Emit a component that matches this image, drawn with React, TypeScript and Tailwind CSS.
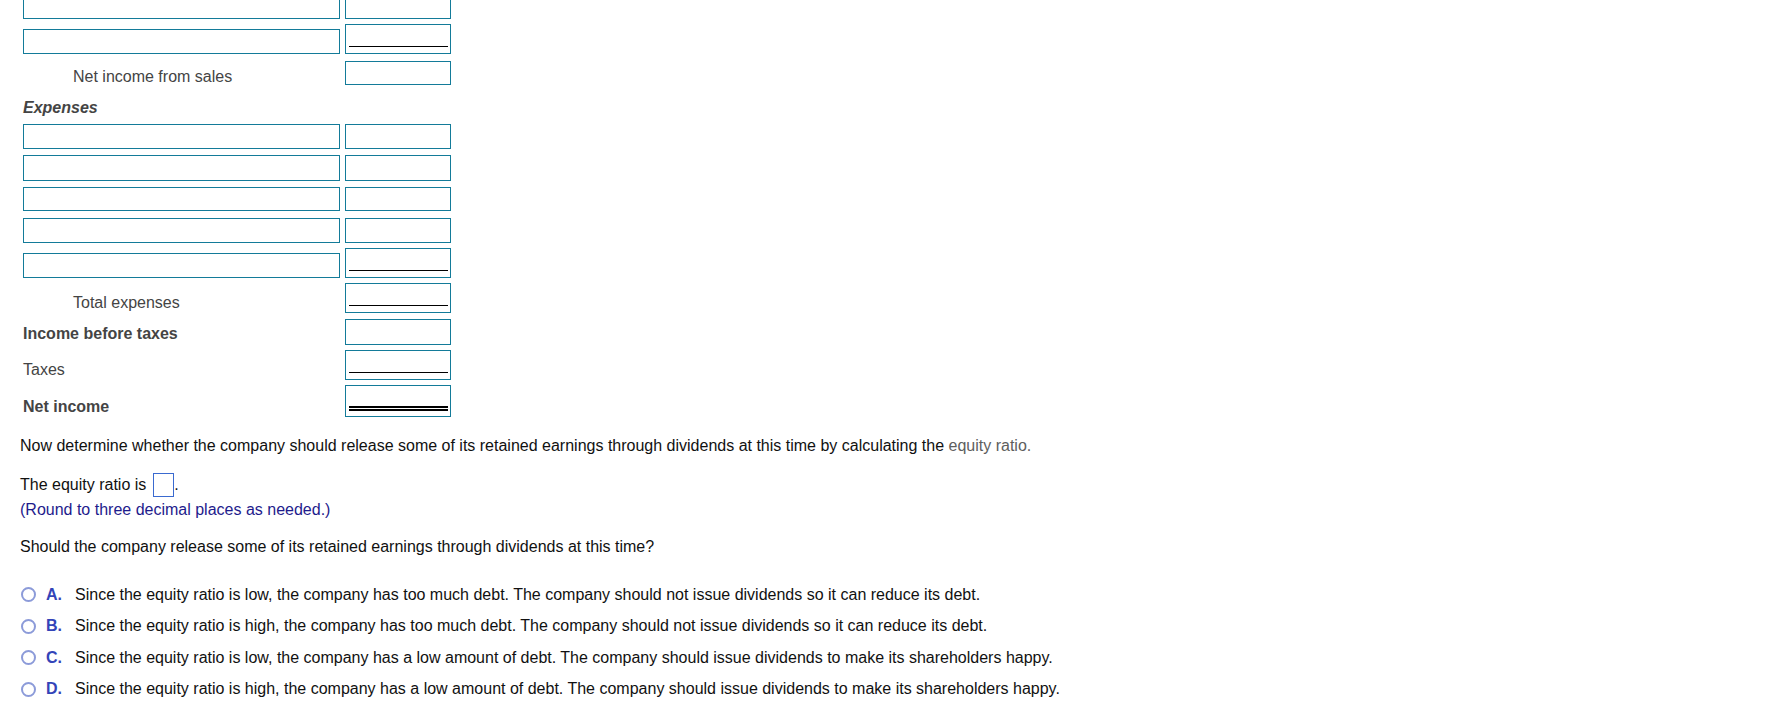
import React from "react";

const TEAL = "border-[#137b99]";

function Box({ h, line }: { h: string; line?: "single" | "double" }) {
  return (
    <div className={`relative w-[106px] shrink-0 border ${TEAL} bg-white ${h}`}>
      {line === "single" && (
        <div className="absolute left-[3px] right-[2px] bottom-[6px] h-px bg-black" />
      )}
      {line === "double" && (
        <div className="absolute left-[3px] right-[2px] bottom-[5px] flex flex-col gap-px">
          <div className="h-[2px] bg-black" />
          <div className="h-[2px] bg-black" />
        </div>
      )}
    </div>
  );
}

function InputRow({ mt, h, line, leftH = "h-[25px]" }: { mt: string; h: string; line?: "single" | "double"; leftH?: string }) {
  return (
    <div className={`flex items-end gap-[5px] ${mt}`}>
      <div className={`w-[317px] shrink-0 border ${TEAL} bg-white ${leftH}`} />
      <Box h={h} line={line} />
    </div>
  );
}

function LabelRow({
  mt,
  h,
  label,
  indent,
  bold,
  pt,
  line,
}: {
  mt: string;
  h: string;
  label: string;
  indent?: boolean;
  bold?: boolean;
  pt: string;
  line?: "single" | "double";
}) {
  return (
    <div className={`flex gap-[5px] ${mt}`}>
      <div
        className={`w-[317px] shrink-0 text-[16px] leading-[18px] text-[#444] ${indent ? "pl-[50px]" : ""} ${bold ? "font-bold" : ""} ${pt}`}
      >
        {label}
      </div>
      <Box h={h} line={line} />
    </div>
  );
}

const options = [
  { k: "A.", t: "Since the equity ratio is low, the company has too much debt. The company should not issue dividends so it can reduce its debt." },
  { k: "B.", t: "Since the equity ratio is high, the company has too much debt. The company should not issue dividends so it can reduce its debt." },
  { k: "C.", t: "Since the equity ratio is low, the company has a low amount of debt. The company should issue dividends to make its shareholders happy." },
  { k: "D.", t: "Since the equity ratio is high, the company has a low amount of debt. The company should issue dividends to make its shareholders happy." },
];

export default function App() {
  return (
    <div className="w-[1766px] h-[707px] overflow-hidden bg-white font-['Liberation_Sans',Arial,sans-serif]">
      {/* statement table */}
      <div className="pl-[23px] -mt-[6px]">
        <InputRow mt="mt-0" h="h-[25px]" />
        <InputRow mt="mt-[5px]" h="h-[30px]" line="single" />
        <LabelRow mt="mt-[7px]" h="h-[24px]" label="Net income from sales" indent pt="pt-[7px]" />
        <div className="mt-[10px] h-[22px] pt-[3px] text-[16px] leading-[18px] font-bold italic text-[#444]">Expenses</div>
        <InputRow mt="mt-[6px]" h="h-[25px]" />
        <InputRow mt="mt-[6px]" h="h-[26px]" leftH="h-[26px]" />
        <InputRow mt="mt-[6px]" h="h-[24px]" leftH="h-[24px]" />
        <InputRow mt="mt-[7px]" h="h-[25px]" />
        <InputRow mt="mt-[5px]" h="h-[30px]" line="single" />
        <LabelRow mt="mt-[5px]" h="h-[30px]" label="Total expenses" indent pt="pt-[11px]" line="single" />
        <LabelRow mt="mt-[6px]" h="h-[26px]" label="Income before taxes" bold pt="pt-[6px]" />
        <LabelRow mt="mt-[5px]" h="h-[30px]" label="Taxes" pt="pt-[11px]" line="single" />
        <LabelRow mt="mt-[5px]" h="h-[32px]" label="Net income" bold pt="pt-[13px]" line="double" />
      </div>

      {/* question text */}
      <div className="pl-[20px] text-[16px] leading-[18px] text-[#111]">
        <p className="mt-[20px]">
          Now determine whether the company should release some of its retained earnings through dividends at this time by
          calculating the <span className="text-[#5e5e5e]">equity ratio.</span>
        </p>
        <div className="mt-[18px] flex h-[24px] items-center">
          <span>The equity ratio is</span>
          <span className="ml-[7px] h-[24px] w-[21px] border border-[#3a6ad0]" />
          <span>.</span>
        </div>
        <p className="mt-[4px] text-[#1e1b8c]">(Round to three decimal places as needed.)</p>
        <p className="mt-[19px]">Should the company release some of its retained earnings through dividends at this time?</p>

        <div className="mt-[23px]">
          {options.map((o) => (
            <div key={o.k} className="flex h-[31.5px] items-center">
              <span className="ml-px h-[15px] w-[15px] rounded-full border-2 border-[#8c9bd9]" />
              <span className="ml-[10px] w-[29px] font-bold text-[#3344b8]">{o.k}</span>
              <span>{o.t}</span>
            </div>
          ))}
        </div>
      </div>
    </div>
  );
}
